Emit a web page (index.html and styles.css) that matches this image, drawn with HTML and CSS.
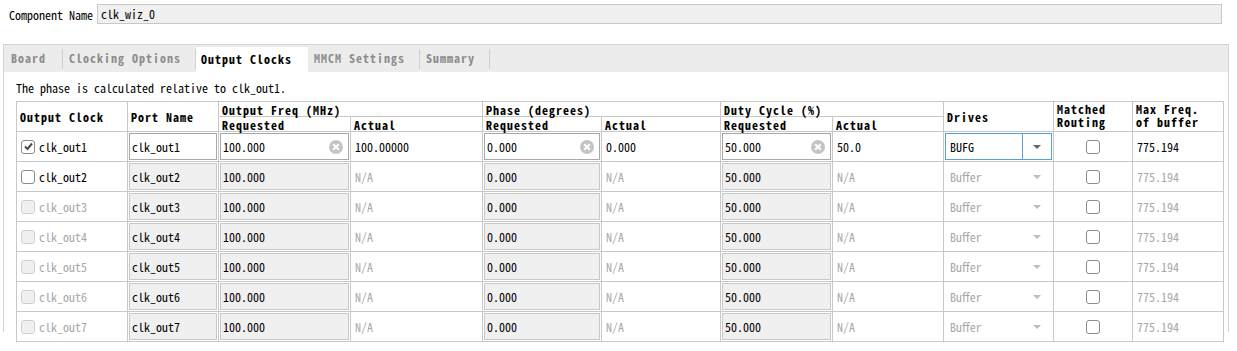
FILE: index.html
```html
<!DOCTYPE html>
<html>
<head>
<meta charset="utf-8">
<link rel="stylesheet" href="styles.css">
</head>
<body>
<div class="page">
  <div class="name-row">
    <span class="name-label">Component Name</span>
    <div class="name-input">clk_wiz_0</div>
  </div>
  <div class="panel">
    <div class="tabs">
      <div class="tab first">Board</div>
      <div class="tab">Clocking Options</div>
      <div class="tab active">Output Clocks</div>
      <div class="tab">MMCM Settings</div>
      <div class="tab">Summary</div>
    </div>
    <div class="content">
      <div class="note">The phase is calculated relative to clk_out1.</div>
      <table class="grid">
        <colgroup>
          <col style="width:111px"><col style="width:91px"><col style="width:132px"><col style="width:132px">
          <col style="width:119px"><col style="width:119px"><col style="width:112px"><col style="width:111px">
          <col style="width:110px"><col style="width:79px"><col style="width:91px">
        </colgroup>
        <thead>
          <tr class="h1">
            <th rowspan="2">Output Clock</th>
            <th rowspan="2">Port Name</th>
            <th colspan="2">Output Freq (MHz)</th>
            <th colspan="2">Phase (degrees)</th>
            <th colspan="2">Duty Cycle (%)</th>
            <th rowspan="2">Drives</th>
            <th rowspan="2" class="two"><div class="ln">Matched</div><div class="ln">Routing</div></th>
            <th rowspan="2" class="two"><div class="ln">Max Freq.</div><div class="ln">of buffer</div></th>
          </tr>
          <tr class="h2">
            <th>Requested</th><th>Actual</th>
            <th>Requested</th><th>Actual</th>
            <th>Requested</th><th>Actual</th>
          </tr>
        </thead>
        <tbody>
          <tr>
            <td><div class="oc"><span class="cb checked"><svg width="11" height="11" viewBox="0 0 11 11"><path d="M2 5.5 L4.5 8 L9 2.5" fill="none" stroke="#4a4a4a" stroke-width="2"/></svg></span><span>clk_out1</span></div></td>
            <td><div class="inp">clk_out1</div></td>
            <td><div class="inp clear">100.000<span class="x"></span></div></td>
            <td class="val">100.00000</td>
            <td><div class="inp clear">0.000<span class="x"></span></div></td>
            <td class="val">0.000</td>
            <td><div class="inp clear">50.000<span class="x"></span></div></td>
            <td class="val">50.0</td>
            <td><div class="sel"><span class="sv">BUFG</span><span class="sa"><i class="tri"></i></span></div></td>
            <td><div class="mr"><span class="cb"></span></div></td>
            <td class="val">775.194</td>
          </tr>
          <tr>
            <td><div class="oc"><span class="cb"></span><span>clk_out2</span></div></td>
            <td><div class="inp dis">clk_out2</div></td>
            <td><div class="inp dis">100.000</div></td>
            <td class="val na">N/A</td>
            <td><div class="inp dis">0.000</div></td>
            <td class="val na">N/A</td>
            <td><div class="inp dis">50.000</div></td>
            <td class="val na">N/A</td>
            <td><div class="sel off"><span class="sv">Buffer</span><span class="sa"><i class="tri"></i></span></div></td>
            <td><div class="mr"><span class="cb"></span></div></td>
            <td class="val na">775.194</td>
          </tr>
          <tr>
            <td><div class="oc off"><span class="cb"></span><span>clk_out3</span></div></td>
            <td><div class="inp dis">clk_out3</div></td>
            <td><div class="inp dis">100.000</div></td>
            <td class="val na">N/A</td>
            <td><div class="inp dis">0.000</div></td>
            <td class="val na">N/A</td>
            <td><div class="inp dis">50.000</div></td>
            <td class="val na">N/A</td>
            <td><div class="sel off"><span class="sv">Buffer</span><span class="sa"><i class="tri"></i></span></div></td>
            <td><div class="mr"><span class="cb"></span></div></td>
            <td class="val na">775.194</td>
          </tr>
          <tr>
            <td><div class="oc off"><span class="cb"></span><span>clk_out4</span></div></td>
            <td><div class="inp dis">clk_out4</div></td>
            <td><div class="inp dis">100.000</div></td>
            <td class="val na">N/A</td>
            <td><div class="inp dis">0.000</div></td>
            <td class="val na">N/A</td>
            <td><div class="inp dis">50.000</div></td>
            <td class="val na">N/A</td>
            <td><div class="sel off"><span class="sv">Buffer</span><span class="sa"><i class="tri"></i></span></div></td>
            <td><div class="mr"><span class="cb"></span></div></td>
            <td class="val na">775.194</td>
          </tr>
          <tr>
            <td><div class="oc off"><span class="cb"></span><span>clk_out5</span></div></td>
            <td><div class="inp dis">clk_out5</div></td>
            <td><div class="inp dis">100.000</div></td>
            <td class="val na">N/A</td>
            <td><div class="inp dis">0.000</div></td>
            <td class="val na">N/A</td>
            <td><div class="inp dis">50.000</div></td>
            <td class="val na">N/A</td>
            <td><div class="sel off"><span class="sv">Buffer</span><span class="sa"><i class="tri"></i></span></div></td>
            <td><div class="mr"><span class="cb"></span></div></td>
            <td class="val na">775.194</td>
          </tr>
          <tr>
            <td><div class="oc off"><span class="cb"></span><span>clk_out6</span></div></td>
            <td><div class="inp dis">clk_out6</div></td>
            <td><div class="inp dis">100.000</div></td>
            <td class="val na">N/A</td>
            <td><div class="inp dis">0.000</div></td>
            <td class="val na">N/A</td>
            <td><div class="inp dis">50.000</div></td>
            <td class="val na">N/A</td>
            <td><div class="sel off"><span class="sv">Buffer</span><span class="sa"><i class="tri"></i></span></div></td>
            <td><div class="mr"><span class="cb"></span></div></td>
            <td class="val na">775.194</td>
          </tr>
          <tr>
            <td><div class="oc off"><span class="cb"></span><span>clk_out7</span></div></td>
            <td><div class="inp dis">clk_out7</div></td>
            <td><div class="inp dis">100.000</div></td>
            <td class="val na">N/A</td>
            <td><div class="inp dis">0.000</div></td>
            <td class="val na">N/A</td>
            <td><div class="inp dis">50.000</div></td>
            <td class="val na">N/A</td>
            <td><div class="sel off"><span class="sv">Buffer</span><span class="sa"><i class="tri"></i></span></div></td>
            <td><div class="mr"><span class="cb"></span></div></td>
            <td class="val na">775.194</td>
          </tr>
        </tbody>
      </table>
    </div>
  </div>
</div>
</body>
</html>
```

FILE: styles.css
```css
html, body {
  margin: 0;
  padding: 0;
  background: #ffffff;
}
body {
  font-family: "Noto Sans CJK JP", "Liberation Mono", monospace;
  font-feature-settings: "hwid" 1;
  font-size: 12px;
  line-height: 15px;
  color: #000;
  width: 1237px;
  height: 351px;
  overflow: hidden;
}
.page {
  padding-top: 4px;
}
.name-row {
  display: flex;
  align-items: center;
  padding-left: 9px;
  height: 20px;
}
.name-label {
  width: 88px;
}
.name-input {
  width: 1120px;
  height: 18px;
  line-height: 18px;
  border: 1px solid #c8c8c8;
  background: #f0f0f0;
  padding-left: 3px;
}
.panel {
  margin: 20px 8px 0 3px;
  border: 1px solid #d4d4d4;
  border-bottom: none;
  height: 287px;
}
.tabs {
  display: flex;
  background: #ececec;
  height: 27px;
  padding-left: 1px;
}
.tab {
  font-weight: bold;
  letter-spacing: 1px;
  color: #8c8c8c;
  padding: 0 15px 0 6px;
  line-height: 26px;
  position: relative;
}
.tab.first {
  padding-right: 17px;
}
.tab::after {
  content: "";
  position: absolute;
  right: 0;
  top: 4px;
  height: 20px;
  border-right: 1px solid #cfcfcf;
}
.tab.active {
  background: #fff;
  color: #000;
  margin-top: 2px;
  line-height: 24px;
  padding-right: 16px;
  padding-left: 5px;
}
.tab.active::after { display: none; }
.content {
  background: #fff;
  padding: 8px 0 0 12px;
  height: 252px;
}
.note {
  line-height: 15px;
  margin-bottom: 6px;
}
.grid {
  border-collapse: collapse;
  table-layout: fixed;
  width: 1208px;
}
.grid th, .grid td {
  border: 1px solid #c8c8c8;
  padding: 0;
  text-align: left;
  vertical-align: middle;
}
.grid th {
  font-weight: bold;
  letter-spacing: 1px;
  padding-left: 3px;
  line-height: 13px;
  height: 14px;
}
.grid th.two {
  vertical-align: top;
  padding-top: 0;
}
.grid th.two .ln {
  line-height: 13px;
}
.grid td {
  height: 27px;
  padding: 1px;
}
.grid td.val {
  padding-left: 4px;
}
.grid td.na {
  color: #a8a8a8;
}
.oc {
  display: flex;
  align-items: center;
  gap: 4px;
  padding-left: 3px;
}
.oc.off { color: #a8a8a8; }
.cb {
  width: 12px;
  height: 12px;
  border: 1px solid #8a8a8a;
  border-radius: 3px;
  background: #fff;
  display: inline-flex;
  align-items: center;
  justify-content: center;
  flex: none;
}
.oc.off .cb {
  border-color: #d0d0d0;
  background: #f0f0f0;
}
.mr {
  display: flex;
  justify-content: center;
}
.inp {
  box-sizing: border-box;
  height: 27px;
  line-height: 25px;
  border: 1px solid #a8a8a8;
  background: #fff;
  padding-left: 2px;
  display: flex;
  align-items: center;
  justify-content: space-between;
}
.inp.dis {
  background: #f0f0f0;
  border-color: #c8c8c8;
}
.x {
  width: 14px;
  height: 14px;
  border-radius: 50%;
  background: #c4c4c4;
  margin-right: 5px;
  position: relative;
}
.x::before, .x::after {
  content: "";
  position: absolute;
  left: 6px;
  top: 3px;
  width: 2px;
  height: 8px;
  background: #fff;
  transform: rotate(45deg);
}
.x::after { transform: rotate(-45deg); }
.sel {
  box-sizing: border-box;
  height: 27px;
  border: 1px solid #5a9fd8;
  display: flex;
  align-items: center;
}
.sel .sv {
  flex: 1;
  padding-left: 4px;
  line-height: 25px;
}
.sel .sa {
  width: 28px;
  height: 25px;
  border-left: 1px solid #5a9fd8;
  display: flex;
  align-items: center;
  justify-content: center;
}
.sel.off {
  border-color: transparent;
  color: #a8a8a8;
}
.sel.off .sa { border-left-color: transparent; }
.tri {
  width: 0;
  height: 0;
  border-left: 4px solid transparent;
  border-right: 4px solid transparent;
  border-top: 4px solid #666;
}
.sel.off .tri { border-top-color: #bdbdbd; }
```
